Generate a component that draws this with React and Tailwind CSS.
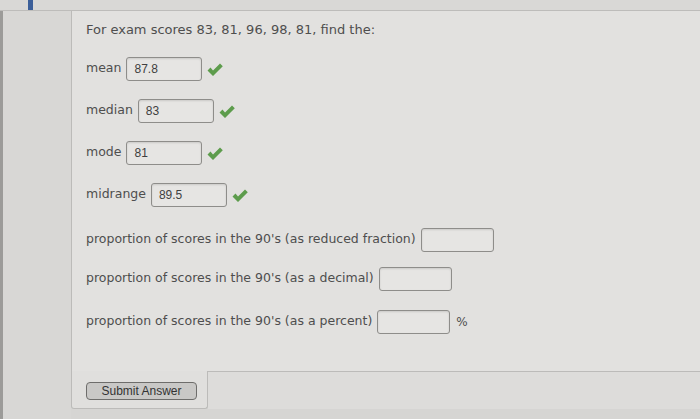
const Check = () => (
  <svg width="16" height="14" viewBox="0 0 16 14" className="ml-[5px] mt-[3px]">
    <path d="M0.5 7.5 L3.5 4.5 L6 7.5 L13 0.5 L15.8 3.2 L6 13 Z" fill="#5d9c4c" />
  </svg>
);

const Field = ({ label, value, width = 'w-[76px]', check, suffix, mb = 'mb-[18px]' }) => (
  <div className={`flex items-center ${mb}`}>
    <span className="mr-[5px]">{label}</span>
    <div
      className={`${width} h-[24px] rounded-[3px] border border-[#8e8d8a] bg-[#e6e5e3] shadow-[inset_0_1px_2px_rgba(0,0,0,0.12)] pl-[7px] flex items-center text-[12px] text-[#3f3f3f] font-['Liberation_Sans',sans-serif]`}
    >
      {value}
    </div>
    {check && <Check />}
    {suffix && <span className="ml-[6px] text-[12px]">{suffix}</span>}
  </div>
);

export default function App() {
  return (
    <div className="w-[700px] h-[419px] bg-[#d6d5d3] flex flex-col overflow-hidden font-['DejaVu_Sans',sans-serif] text-[12.5px] text-[#4e4e4e]">
      <div className="h-[11px] shrink-0 border-b border-[#bdbcba] bg-[#d9d8d6] flex">
        <div className="ml-[28px] w-[5px] h-[10px] bg-[#3c5f99]" />
      </div>
      <div className="flex flex-1 min-h-0">
        <div className="w-[3px] bg-[#9c9b99]" />
        <div className="w-[68px] bg-[#d8d7d5]" />
        <div className="flex-1 flex flex-col">
          <div className="h-[360px] border-l border-[#bcbbb9] bg-[#e2e1df] pl-[14px] pt-[9px]">
            <p className="mb-[17px] text-[13px]">For exam scores 83, 81, 96, 98, 81, find the:</p>
            <Field label="mean" value="87.8" check />
            <Field label="median" value="83" check />
            <Field label="mode" value="81" check />
            <Field label="midrange" value="89.5" check mb="mb-[21px]" />
            <Field label="proportion of scores in the 90's (as reduced fraction)" width="w-[73px]" mb="mb-[15px]" />
            <Field label="proportion of scores in the 90's (as a decimal)" width="w-[73px]" mb="mb-[19px]" />
            <Field label="proportion of scores in the 90's (as a percent)" width="w-[73px]" suffix="%" />
          </div>
          <div className="flex">
            <div className="w-[137px] h-[38px] border-l border-b border-r border-[#bcbbb9] rounded-bl-[3px] rounded-br-[3px] bg-[#e0dfdd] pl-[14px] pt-[11px]">
              <button className="w-[111px] h-[18px] rounded-[4px] border border-[#6e6d6b] bg-[#c9c8c6] text-[12px] text-[#333] font-['Liberation_Sans',sans-serif] leading-none">
                Submit Answer
              </button>
            </div>
            <div className="flex-1 border-t border-[#bcbbb9] bg-[#dddcda]" />
          </div>
        </div>
      </div>
    </div>
  );
}
